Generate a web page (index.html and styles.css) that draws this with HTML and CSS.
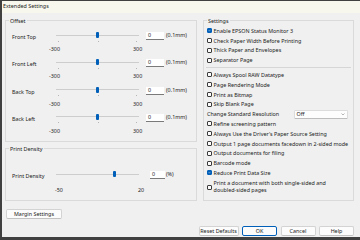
FILE: index.html
```html
<!DOCTYPE html>
<html>
<head>
<meta charset="utf-8">
<link rel="stylesheet" href="styles.css">
</head>
<body>
<div class="window">
  <div class="titlebar">Extended Settings</div>
  <div class="main">
    <div class="left">
      <div class="group offset">
        <div class="group-title">Offset</div>
        <div class="sliders">
          <div class="slider-block">
            <div class="srow">
              <span class="slabel">Front Top</span>
              <div class="slider"><div class="track"></div><i class="tick t0"></i><i class="tick t50"></i><i class="tick t100"></i><div class="thumb" style="left:50%"></div></div>
              <div class="input">0</div><span class="unit">(0.1mm)</span>
            </div>
            <div class="scale"><span class="smin">-300</span><span>300</span></div>
          </div>
          <div class="slider-block">
            <div class="srow">
              <span class="slabel">Front Left</span>
              <div class="slider"><div class="track"></div><i class="tick t0"></i><i class="tick t50"></i><i class="tick t100"></i><div class="thumb" style="left:50%"></div></div>
              <div class="input">0</div><span class="unit">(0.1mm)</span>
            </div>
            <div class="scale"><span class="smin">-300</span><span>300</span></div>
          </div>
          <div class="slider-block">
            <div class="srow">
              <span class="slabel">Back Top</span>
              <div class="slider"><div class="track"></div><i class="tick t0"></i><i class="tick t50"></i><i class="tick t100"></i><div class="thumb" style="left:50%"></div></div>
              <div class="input">0</div><span class="unit">(0.1mm)</span>
            </div>
            <div class="scale"><span class="smin">-300</span><span>300</span></div>
          </div>
          <div class="slider-block">
            <div class="srow">
              <span class="slabel">Back Left</span>
              <div class="slider"><div class="track"></div><i class="tick t0"></i><i class="tick t50"></i><i class="tick t100"></i><div class="thumb" style="left:50%"></div></div>
              <div class="input">0</div><span class="unit">(0.1mm)</span>
            </div>
            <div class="scale"><span class="smin">-300</span><span>300</span></div>
          </div>
        </div>
      </div>
      <div class="group density">
        <div class="group-title">Print Density</div>
        <div class="density-block">
          <div class="srow">
            <span class="slabel">Print Density</span>
            <div class="slider"><div class="track"></div><div class="thumb" style="left:71.4%"></div></div>
            <div class="input input-small">0</div><span class="unit unit-small">(%)</span>
          </div>
          <div class="scale scale-density"><span class="smin">-50</span><span>20</span></div>
        </div>
      </div>
      <div class="btn margin-btn">Margin Settings</div>
    </div>
    <div class="right">
      <div class="group settings">
        <div class="group-title">Settings</div>
        <div class="checks first">
          <div class="crow"><span class="cb checked"><svg viewBox="0 0 10 10"><polyline points="2.2,5.2 4.2,7.2 7.8,3" /></svg></span>Enable EPSON Status Monitor 3</div>
          <div class="crow"><span class="cb"></span>Check Paper Width Before Printing</div>
          <div class="crow"><span class="cb"></span>Thick Paper and Envelopes</div>
          <div class="crow"><span class="cb"></span>Separator Page</div>
        </div>
        <div class="sep"></div>
        <div class="checks second">
          <div class="crow"><span class="cb"></span>Always Spool RAW Datatype</div>
          <div class="crow"><span class="cb"></span>Page Rendering Mode</div>
          <div class="crow"><span class="cb"></span>Print as Bitmap</div>
          <div class="crow"><span class="cb"></span>Skip Blank Page</div>
          <div class="crow"><span>Change Standard Resolution</span>
            <div class="select"><span>Off</span><svg viewBox="0 0 8 5"><polyline points="1,1 4,4 7,1" /></svg></div>
          </div>
          <div class="crow"><span class="cb"></span>Refine screening pattern</div>
          <div class="crow"><span class="cb"></span>Always Use the Driver's Paper Source Setting</div>
          <div class="crow"><span class="cb"></span>Output 1 page documents facedown in 2-sided mode</div>
          <div class="crow"><span class="cb"></span>Output documents for filing</div>
          <div class="crow"><span class="cb"></span>Barcode mode</div>
          <div class="crow"><span class="cb checked"><svg viewBox="0 0 10 10"><polyline points="2.2,5.2 4.2,7.2 7.8,3" /></svg></span>Reduce Print Data Size</div>
          <div class="crow multi"><span class="cb"></span><span class="mtext">Print a document with both single-sided and<br>doubled-sided pages</span></div>
        </div>
      </div>
    </div>
  </div>
  <div class="footer">
    <div class="btn fbtn reset">Reset Defaults</div>
    <div class="btn fbtn ok">OK</div>
    <div class="btn fbtn">Cancel</div>
    <div class="btn fbtn">Help</div>
  </div>
</div>
</body>
</html>
```

FILE: styles.css
```css
html, body {
  margin: 0;
  padding: 0;
}
body {
  width: 360px;
  height: 240px;
  overflow: hidden;
  background: #f0f0f0;
  font-family: "Noto Sans", sans-serif;
  font-size: 5.4px;
  color: #1b1b1b;
}
.window {
  height: 240px;
  box-sizing: border-box;
  border-left: 2px solid #404040;
  border-top: 1px solid #404040;
  border-bottom: 3px solid #404040;
  display: flex;
  flex-direction: column;
}
.titlebar {
  height: 12px;
  line-height: 11px;
  padding-left: 1px;
  background: #f7f7ee;
  flex: none;
}
.main {
  flex: 1;
  display: flex;
  gap: 6px;
  padding: 7px 0 0 3px;
}
.left {
  width: 192px;
  display: flex;
  flex-direction: column;
}
.right {
  width: 151px;
}
.group {
  border: 1px solid #dadada;
  box-sizing: border-box;
}
.group-title {
  margin: -3px 0 0 3px;
  padding: 0 1px;
  width: fit-content;
  background: #f0f0f0;
  line-height: 6px;
  height: 6px;
}
.offset {
  height: 122px;
}
.sliders {
  padding-top: 8px;
}
.slider-block {
  display: flex;
  flex-direction: column;
  gap: 4px;
  height: 27.33px;
}
.srow {
  display: flex;
  height: 10px;
  padding-left: 6px;
}
.slabel {
  width: 44px;
  line-height: 10px;
}
.slider {
  position: relative;
  width: 79px;
  margin: 0 2px;
  height: 10px;
}
.track {
  position: absolute;
  left: -2px;
  right: -2px;
  top: 2.5px;
  height: 1px;
  background: #cdcdcd;
}
.thumb {
  position: absolute;
  top: 0;
  width: 3px;
  height: 6px;
  margin-left: -1.5px;
  background: #005fb8;
  border-radius: 1px;
}
.tick {
  position: absolute;
  top: 8.5px;
  width: 1px;
  height: 1px;
  background: #b5b5b5;
}
.t0 { left: 0; }
.t50 { left: 39.5px; }
.t100 { left: 78px; }
.input {
  margin-left: 7px;
  width: 18px;
  height: 8px;
  box-sizing: border-box;
  background: #fff;
  border-bottom: 1px solid #7a7a7a;
  padding-left: 2px;
  line-height: 7px;
}
.unit {
  margin-left: 2px;
  line-height: 6px;
}
.scale {
  display: flex;
  height: 7px;
  line-height: 7px;
  padding-left: 43px;
}
.smin {
  width: 84px;
}
.density {
  margin-top: 6px;
  height: 53px;
}
.density-block {
  padding-top: 19px;
  display: flex;
  flex-direction: column;
  gap: 5.5px;
}
.input-small {
  margin-left: 11px;
  width: 15px;
}
.unit-small {
  margin-left: 1px;
}
.scale-density {
  padding-left: 49px;
}
.scale-density .smin {
  width: 83px;
}
.btn {
  box-sizing: border-box;
  background: #fcfcfc;
  border: 1px solid #d3d3d3;
  border-bottom-color: #c2c2c2;
  border-radius: 2px;
  height: 10px;
  line-height: 8px;
  text-align: center;
}
.margin-btn {
  margin: 8px 0 0 1px;
  width: 56px;
}
.settings {
  height: 181px;
}
.checks.first {
  padding-top: 2.15px;
}
.crow {
  display: flex;
  align-items: center;
  height: 9.7px;
  padding-left: 3px;
  white-space: nowrap;
}
.second .crow {
  height: 9.8px;
}
.cb {
  flex: none;
  width: 5px;
  height: 5px;
  box-sizing: border-box;
  border: 0.7px solid #3c3c3c;
  border-radius: 1px;
  margin-right: 1.6px;
  background: #fbfbfb;
  display: flex;
}
.cb.checked {
  background: #005fb8;
  border-color: #005fb8;
}
.cb svg {
  width: 100%;
  height: 100%;
  fill: none;
  stroke: #fff;
  stroke-width: 1.4;
}
.sep {
  height: 1px;
  margin: 2px 2px 2.2px;
  background: #d6d6d6;
}
.select {
  margin-left: auto;
  margin-right: 5px;
  width: 54px;
  height: 9px;
  box-sizing: border-box;
  background: #fdfdfd;
  border: 1px solid #dcdcdc;
  border-bottom-color: #bdbdbd;
  border-radius: 1.5px;
  display: flex;
  align-items: center;
  justify-content: space-between;
  padding: 0 2px 0 1.5px;
}
.select svg {
  width: 4px;
  height: 2.5px;
  fill: none;
  stroke: #6a6a6a;
  stroke-width: 1;
}
.crow.multi {
  height: auto;
  padding-top: 2.6px;
  align-items: center;
}
.mtext {
  line-height: 6.6px;
}
.footer {
  flex: none;
  height: 10px;
  margin-bottom: 1px;
  display: flex;
  justify-content: flex-end;
  gap: 3.5px;
  padding-right: 6px;
}
.fbtn {
  width: 35px;
}
.fbtn.reset {
  width: 40px;
}
.fbtn.ok {
  border-color: #005fb8;
}
```
